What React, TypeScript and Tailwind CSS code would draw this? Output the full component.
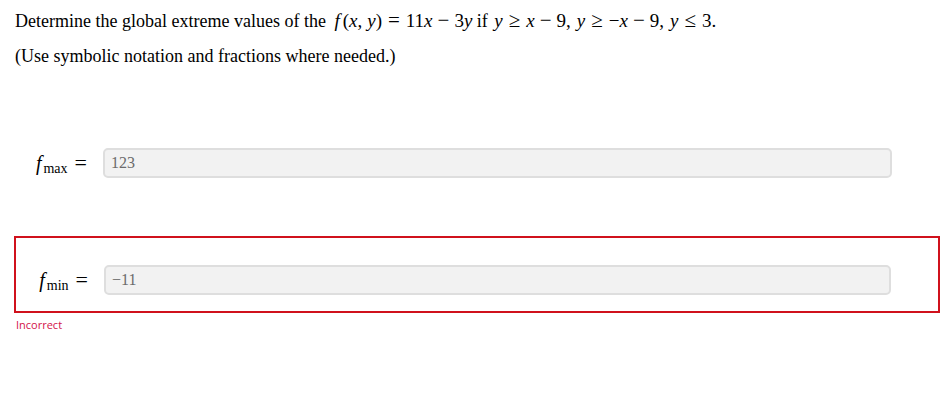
import React from "react";

function V({ children, className = "" }: { children: React.ReactNode; className?: string }) {
  return <i className={`italic ${className}`}>{children}</i>;
}

function Rel({ children }: { children: React.ReactNode }) {
  return <span className="mx-[6px] inline-block text-[21px] leading-none">{children}</span>;
}

function Bin({ children }: { children: React.ReactNode }) {
  return <span className="mx-[5px] inline-block text-[21px] leading-none">{children}</span>;
}

function AnswerRow({ sub, value }: { sub: string; value: string }) {
  return (
    <div className="flex items-center">
      <div className="flex w-[88px] items-baseline justify-end pr-[16px]">
        <span className="mr-[2px] text-[20px] italic">f</span>
        <span className="relative top-[3px] mr-[7px] text-[14px]">{sub}</span>
        <span className="text-[22px] leading-none">=</span>
      </div>
      <div className="flex h-[30px] flex-1 items-center rounded-[5px] border-2 border-[#dedede] bg-[#f2f2f2] px-[6px] text-[16px] text-[#6b6b6b]">
        {value}
      </div>
    </div>
  );
}

export default function App() {
  return (
    <div className="min-h-[400px] bg-white font-['Liberation_Serif',serif] text-[18px] text-black">
      <div className="pl-[15px] pr-[8px] pt-[9px]">
        <p className="leading-[24px]">
          Determine the global extreme values of the{" "}
          <span className="ml-[4px] text-[19px]">
            <V className="mr-[3px]">f</V>(<V>x</V>,<span className="ml-[5px]" />
            <V>y</V>)<Rel>=</Rel>11<V>x</V>
            <Bin>−</Bin>3<V>y</V>
          </span>{" "}
          if{" "}
          <span className="ml-[2px] text-[19px]">
            <V>y</V>
            <Rel>≥</Rel>
            <V>x</V>
            <Bin>−</Bin>9,<span className="ml-[6px]" />
            <V>y</V>
            <Rel>≥</Rel>−<V>x</V>
            <Bin>−</Bin>9,<span className="ml-[6px]" />
            <V>y</V>
            <Rel>≤</Rel>3.
          </span>
        </p>
        <p className="mt-[11px] leading-[24px]">(Use symbolic notation and fractions where needed.)</p>
      </div>

      <div className="mt-[80px] pl-[15px] pr-[55px]">
        <AnswerRow sub="max" value="123" />
      </div>

      <div className="ml-[14px] mr-[7px] mt-[58px] border-2 border-[#d0111c] pb-[16px] pr-[47px] pt-[27px]">
        <AnswerRow sub="min" value="−11" />
      </div>
      <p className="ml-[16px] mt-[4px] font-['Open_Sans',sans-serif] text-[11px] text-[#d3134a]">Incorrect</p>
    </div>
  );
}
